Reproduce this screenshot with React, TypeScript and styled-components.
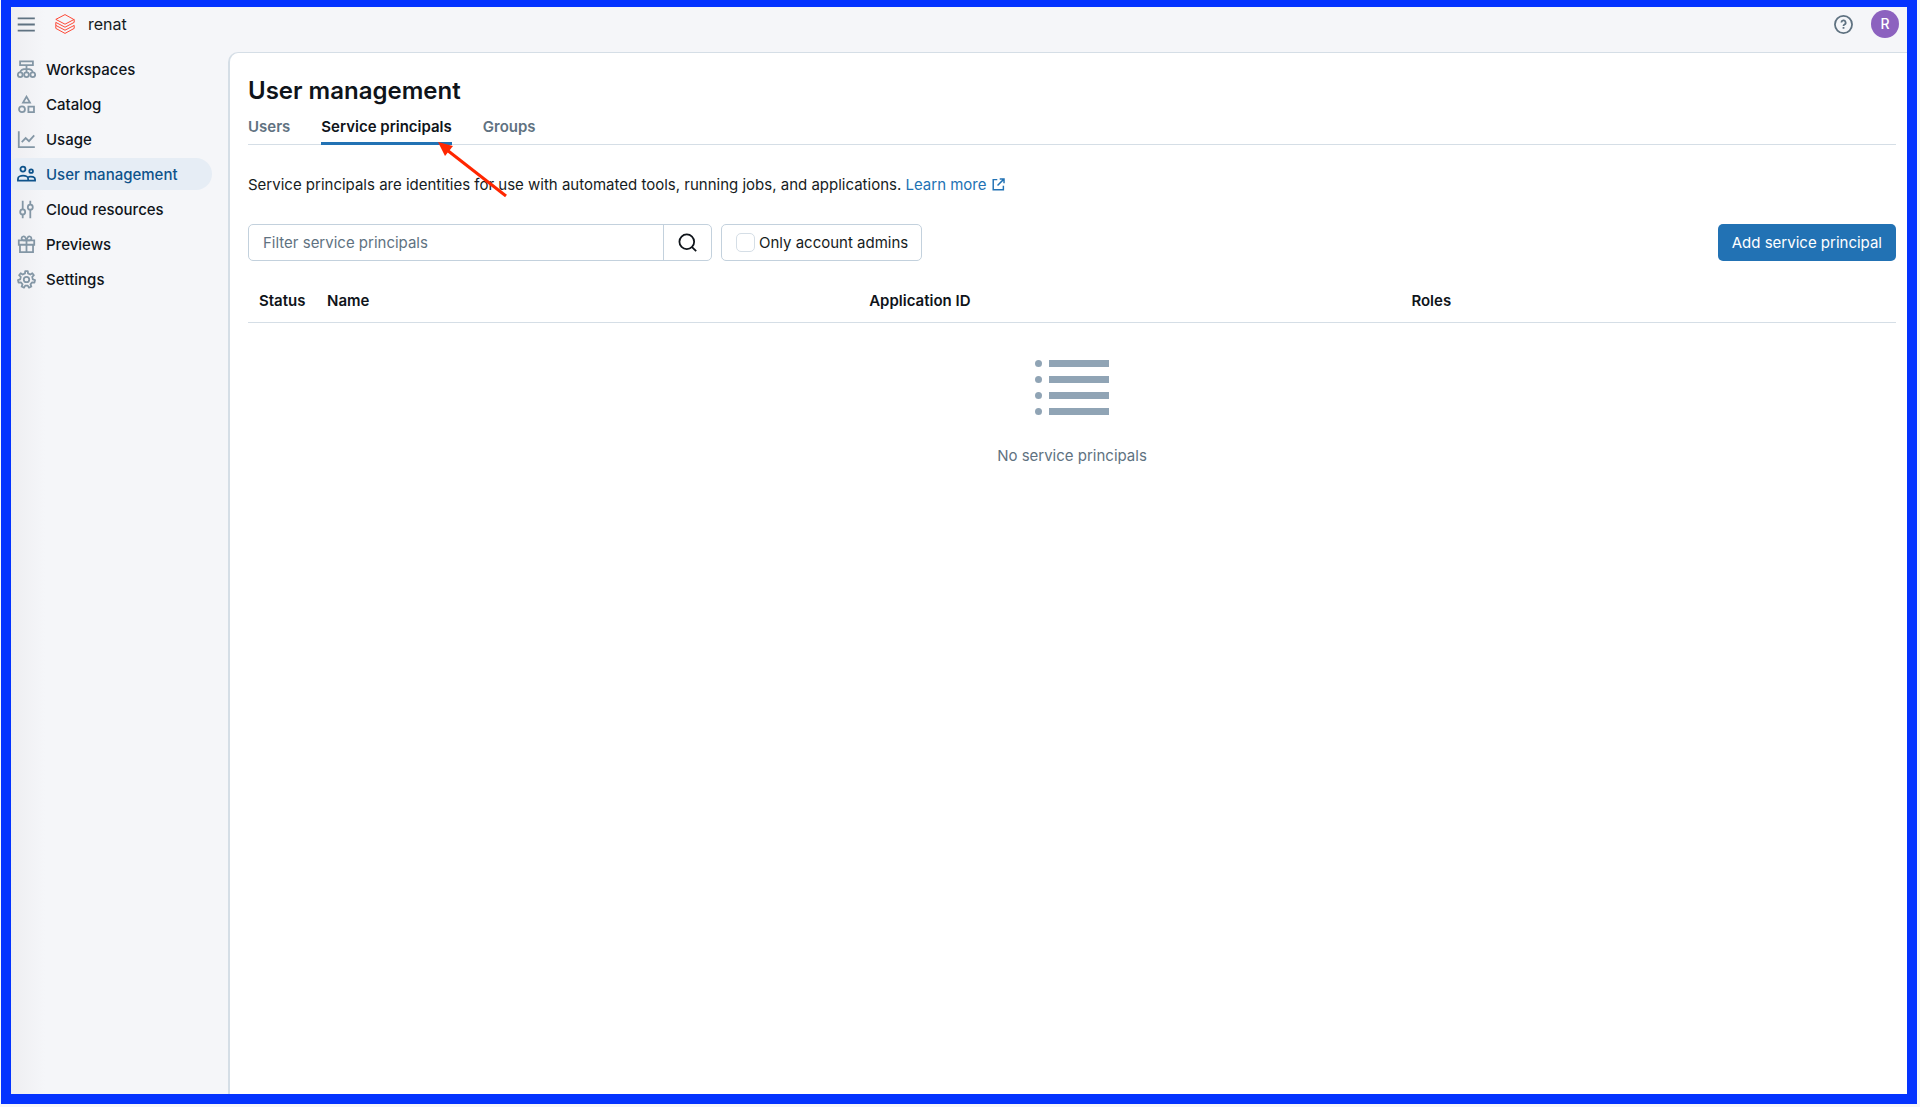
import React from 'react';
import styled, { createGlobalStyle, css } from 'styled-components';

const color = {
  frame: '#0433ff',
  canvas: '#f5f6f9',
  panel: '#ffffff',
  line: '#d5dee6',
  control: '#c3d1dd',
  text: '#161c22',
  strong: '#0f141a',
  muted: '#5f7281',
  icon: '#8396a5',
  blue: '#2272b4',
  navActive: '#0e538b',
  navActiveBg: '#e6edf5',
  list: '#90a4b5',
};

const GlobalStyle = createGlobalStyle`
  *, *::before, *::after { box-sizing: border-box; }
  body {
    margin: 0;
    background: ${color.canvas};
    color: ${color.text};
    font-family: Inter, "Open Sans", sans-serif;
    font-size: 15px;
    line-height: 20px;
  }
  button, input { font: inherit; color: inherit; }
`;

const Screen = styled.div`
  min-height: 100vh;
  display: flex;
  padding: 0 3px 3px 1px;
`;

const Frame = styled.div`
  flex: 1;
  display: flex;
  flex-direction: column;
  border: 10px solid ${color.frame};
  border-top-width: 7px;
  background: linear-gradient(to right, #eeeef1 0, ${color.canvas} 34px);
`;

const TopBar = styled.header`
  display: flex;
  align-items: center;
  justify-content: space-between;
  height: 45px;
  padding: 0 8px 11px 6px;
`;

const Group = styled.div<{ $gap: number }>`
  display: flex;
  align-items: center;
  gap: ${(p) => p.$gap}px;
`;

const IconButton = styled.button<{ $tone?: string }>`
  display: grid;
  place-items: center;
  padding: 0;
  border: 0;
  background: none;
  color: ${(p) => p.$tone ?? color.muted};
  cursor: pointer;
`;

const Brand = styled.a`
  display: flex;
  align-items: center;
  gap: 13px;
  color: ${color.text};
  font-size: 16px;
  text-decoration: none;
`;

const Avatar = styled.button`
  width: 28px;
  height: 28px;
  padding: 0;
  border: 0;
  border-radius: 50%;
  background: #8c62bf;
  color: #fff;
  font-size: 14px;
  font-weight: 500;
`;

const Body = styled.div`
  flex: 1;
  display: grid;
  grid-template-columns: 217px minmax(0, 1fr);
`;

const Sidebar = styled.nav`
  display: flex;
  flex-direction: column;
  gap: 3px;
  padding: 1px 16px 0 0;
`;

const NavLink = styled.a<{ $active?: boolean }>`
  display: flex;
  align-items: center;
  gap: 10px;
  height: 32px;
  padding: 1px 0 0 6px;
  border-radius: 6px 16px 16px 6px;
  color: ${color.strong};
  font-weight: 500;
  text-decoration: none;
  svg { color: ${color.icon}; }
  ${(p) =>
    p.$active &&
    css`
      background: ${color.navActiveBg};
      color: ${color.navActive};
      svg { color: ${color.navActive}; }
    `}
`;

const Panel = styled.main`
  padding: 21px 11px 20px 18px;
  border: solid ${color.line};
  border-width: 1px 0 0 2px;
  border-radius: 10px 0 0 0;
  background: ${color.panel};
`;

const Title = styled.h1`
  margin: 0;
  color: ${color.strong};
  font-size: 24px;
  font-weight: 600;
  line-height: 34px;
`;

const Tabs = styled.div`
  position: relative;
  display: flex;
  gap: 31px;
  margin-top: 8px;
  border-bottom: 1px solid ${color.line};
`;

const Tab = styled.button<{ $active?: boolean }>`
  height: 29px;
  margin-bottom: -1px;
  padding: 0 0 4px;
  border: 0;
  border-bottom: 3px solid ${(p) => (p.$active ? color.blue : 'transparent')};
  background: none;
  color: ${(p) => (p.$active ? color.strong : color.muted)};
  font-weight: 600;
  cursor: pointer;
`;

const Pointer = styled.svg`
  position: absolute;
  top: 25px;
  left: 189px;
  pointer-events: none;
`;

const Intro = styled.p`
  margin: 30px 0 29px;
`;

const InlineLink = styled.a`
  color: ${color.blue};
  text-decoration: none;
  svg { margin-left: 5px; vertical-align: -1px; }
`;

const Toolbar = styled.div`
  display: flex;
  align-items: stretch;
  gap: 9px;
  height: 37px;
`;

const SearchBox = styled.form`
  display: flex;
  width: 464px;
  border: 1px solid ${color.control};
  border-radius: 5px;
`;

const SearchInput = styled.input`
  flex: 1;
  min-width: 0;
  padding: 1px 14px 0;
  border: 0;
  background: none;
  outline: none;
  &::placeholder { color: ${color.muted}; opacity: 1; }
`;

const SearchButton = styled(IconButton)`
  width: 48px;
  border-left: 1px solid ${color.control};
`;

const CheckLabel = styled.label`
  display: flex;
  align-items: center;
  gap: 4px;
  padding: 0 13px 0 14px;
  border: 1px solid ${color.control};
  border-radius: 5px;
`;

const Checkbox = styled.input`
  appearance: none;
  width: 19px;
  height: 19px;
  margin: 0;
  border: 1px solid ${color.line};
  border-radius: 5px;
  background: #fff;
  &:checked { background: ${color.blue}; }
`;

const PrimaryButton = styled.button`
  margin-left: auto;
  padding: 1px 14px 0;
  border: 0;
  border-radius: 5px;
  background: ${color.blue};
  color: #fff;
  cursor: pointer;
`;

const Table = styled.table`
  width: 100%;
  margin-top: 23px;
  border-collapse: collapse;
  table-layout: fixed;
`;

const HeadCell = styled.th<{ $width?: string }>`
  width: ${(p) => p.$width ?? 'auto'};
  height: 38px;
  padding: 0 0 3px 11px;
  border-bottom: 1px solid ${color.line};
  color: ${color.strong};
  font-weight: 600;
  text-align: left;
  white-space: nowrap;
`;

const EmptyCell = styled.td`
  padding: 37px 0;
  color: ${color.muted};
  text-align: center;
  svg { display: block; margin: 0 auto 30px; }
`;

type IconProps = { size?: number; children: React.ReactNode };

const Icon = ({ size = 19, children }: IconProps) => (
  <svg
    width={size}
    height={size}
    viewBox="0 0 16 16"
    fill="none"
    stroke="currentColor"
    strokeWidth="1.5"
    aria-hidden="true"
  >
    {children}
  </svg>
);

const gearPath = (() => {
  const teeth = 7;
  const points: string[] = [];
  for (let i = 0; i < teeth; i++) {
    const mid = (i / teeth) * Math.PI * 2 - Math.PI / 2;
    [
      [-0.24, 5.3],
      [-0.15, 7.2],
      [0.15, 7.2],
      [0.24, 5.3],
    ].forEach(([offset, r]) => {
      const a = mid + offset;
      points.push(`${(8 + r * Math.cos(a)).toFixed(2)} ${(8 + r * Math.sin(a)).toFixed(2)}`);
    });
  }
  return `M${points.join('L')}Z`;
})();

const MenuIcon = () => (
  <Icon><path d="M.6 2.9h14.400M.6 8h14.400M.6 13.100h14.400" /></Icon>
);
const WorkspacesIcon = () => (
  <Icon>
    <path d="M2.600 1.200h10.800v3.200H2.600zM8 4.400v5.800M2.700 10.400C3 8.400 4.300 7.400 8 7.400s5 1 5.300 3" />
    <circle cx="2.700" cy="12.500" r="2" />
    <circle cx="8" cy="12.500" r="2" />
    <circle cx="13.300" cy="12.500" r="2" />
  </Icon>
);
const CatalogIcon = () => (
  <Icon>
    <path d="M8 1.400l2.900 5H5.100zM9.600 9.700h4.700v4.700H9.600z" />
    <circle cx="4.200" cy="12" r="2.500" />
  </Icon>
);
const UsageIcon = () => (
  <Icon><path d="M1.500 1v13.500H15M4 10.200l3.300-3.400 2.800 2.600L14.500 4.600" /></Icon>
);
const UsersIcon = () => (
  <Icon>
    <circle cx="5" cy="3.400" r="2.100" />
    <circle cx="11.900" cy="5.200" r="1.500" />
    <path d="M.800 13.200v-1.500c0-1.500 2-2.700 4.300-2.700s4.300 1.200 4.300 2.700v1.500zM9.400 13.200h5.800v-1.300c0-1.600-2.700-2.700-5.600-1.900" />
  </Icon>
);
const SlidersIcon = () => (
  <Icon>
    <path d="M4.800.6v7.300M4.800 12.100v3.300M11.200.6v3.300M11.200 8.100v7.300" />
    <circle cx="4.800" cy="10" r="2.100" />
    <circle cx="11.200" cy="6" r="2.100" />
  </Icon>
);
const GiftIcon = () => (
  <Icon>
    <path d="M1.500 4.600h13v3.600h-13zM2.500 8.200h11v6.300h-11zM8 4.600v9.900" />
    <path d="M8 4.600H5.400a1.700 1.700 0 1 1 1.700-2.400C7.600 3 8 4.600 8 4.600zM8 4.600h2.600a1.700 1.700 0 1 0-1.700-2.400C8.400 3 8 4.600 8 4.600z" />
  </Icon>
);
const GearIcon = () => (
  <Icon>
    <path d={gearPath} strokeLinejoin="round" />
    <circle cx="8" cy="8" r="2.300" />
  </Icon>
);
const HelpIcon = () => (
  <Icon>
    <circle cx="8" cy="8" r="7.200" />
    <path d="M6.200 6.400a1.800 1.800 0 1 1 2.600 1.600c-.6.3-.8.600-.8 1.200M8 10.100v1.500" />
  </Icon>
);
const SearchIcon = () => (
  <Icon>
    <circle cx="7.400" cy="7.400" r="6.200" />
    <path d="M11.800 11.800l3.500 3.500" />
  </Icon>
);
const ExternalIcon = () => (
  <Icon size={13}>
    <path strokeWidth="1.800" d="M6.500 2H1.500v12.500H14V9.500M9.500 1.200h5.300v5.300M14.600 1.400L6.800 9.200" />
  </Icon>
);
const BrandLogo = () => (
  <svg
    width="20"
    height="20"
    viewBox="0 0 20 20"
    fill="none"
    stroke="#ff3621"
    strokeWidth=".9"
    strokeLinejoin="round"
    aria-hidden="true"
  >
    <path d="M18.700 5.400L10 .600.800 5.400 10 10.200l9.200-4.800v3L10 13.200.800 8.400" />
    <path d="M.800 8.400v3L10 16.200l9.200-4.800v3L10 19.400.800 14.400v-3" />
  </svg>
);
const ListDrawing = () => (
  <svg width="74" height="56" viewBox="0 0 74 56" fill={color.list} aria-hidden="true">
    {[0, 16, 32, 48].map((y) => (
      <g key={y}>
        <circle cx="3.500" cy={y + 3.5} r="3.500" />
        <rect x="14" y={y} width="60" height="7" />
      </g>
    ))}
  </svg>
);

const navItems = [
  { label: 'Workspaces', icon: <WorkspacesIcon /> },
  { label: 'Catalog', icon: <CatalogIcon /> },
  { label: 'Usage', icon: <UsageIcon /> },
  { label: 'User management', icon: <UsersIcon />, active: true },
  { label: 'Cloud resources', icon: <SlidersIcon /> },
  { label: 'Previews', icon: <GiftIcon /> },
  { label: 'Settings', icon: <GearIcon /> },
];

export default function App() {
  return (
    <>
      <GlobalStyle />
      <Screen>
        <Frame>
          <TopBar>
            <Group $gap={19}>
              <IconButton aria-label="Menu"><MenuIcon /></IconButton>
              <Brand href="#"><BrandLogo />renat</Brand>
            </Group>
            <Group $gap={18}>
              <IconButton aria-label="Help"><HelpIcon /></IconButton>
              <Avatar>R</Avatar>
            </Group>
          </TopBar>
          <Body>
            <Sidebar>
              {navItems.map((item) => (
                <NavLink key={item.label} href="#" $active={item.active}>
                  {item.icon}
                  {item.label}
                </NavLink>
              ))}
            </Sidebar>
            <Panel>
              <Title>User management</Title>
              <Tabs role="tablist">
                <Tab role="tab">Users</Tab>
                <Tab role="tab" aria-selected $active>Service principals</Tab>
                <Tab role="tab">Groups</Tab>
                <Pointer width="72" height="58" viewBox="0 0 72 58" aria-hidden="true">
                  <path d="M10 9L69 55" stroke="#ff2600" strokeWidth="3" />
                  <path d="M1 1l15 4-8 10z" fill="#ff2600" />
                </Pointer>
              </Tabs>
              <Intro>
                Service principals are identities for use with automated tools, running jobs, and applications.{' '}
                <InlineLink href="#">Learn more<ExternalIcon /></InlineLink>
              </Intro>
              <Toolbar>
                <SearchBox onSubmit={(e) => e.preventDefault()}>
                  <SearchInput aria-label="Filter service principals" placeholder="Filter service principals" />
                  <SearchButton $tone={color.strong} aria-label="Search"><SearchIcon /></SearchButton>
                </SearchBox>
                <CheckLabel>
                  <Checkbox type="checkbox" />
                  Only account admins
                </CheckLabel>
                <PrimaryButton>Add service principal</PrimaryButton>
              </Toolbar>
              <Table>
                <thead>
                  <tr>
                    <HeadCell $width="68px">Status</HeadCell>
                    <HeadCell $width="32.9%">Name</HeadCell>
                    <HeadCell $width="32.9%">Application ID</HeadCell>
                    <HeadCell>Roles</HeadCell>
                  </tr>
                </thead>
                <tbody>
                  <tr>
                    <EmptyCell colSpan={4}>
                      <ListDrawing />
                      No service principals
                    </EmptyCell>
                  </tr>
                </tbody>
              </Table>
            </Panel>
          </Body>
        </Frame>
      </Screen>
    </>
  );
}
